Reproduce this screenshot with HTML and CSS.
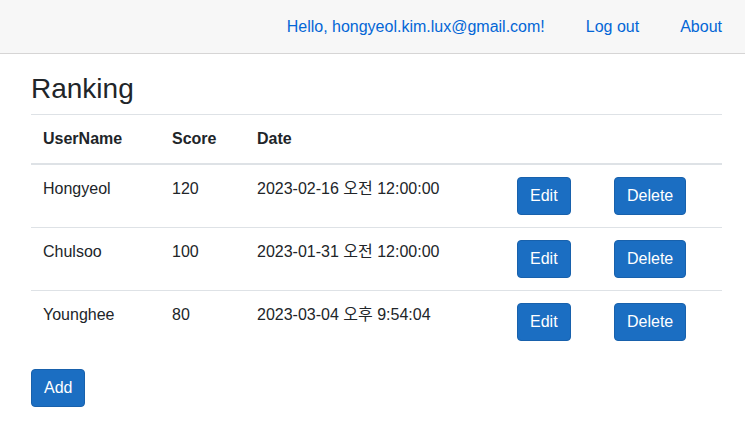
FILE: index.html
```html
<!DOCTYPE html>
<html>
<head>
<meta charset="utf-8">
<title>Ranking</title>
<link rel="stylesheet" href="styles.css">
</head>
<body>
<div class="top-row">
  <a href="#">Hello, hongyeol.kim.lux@gmail.com!</a>
  <a href="#">Log out</a>
  <a href="#">About</a>
</div>
<div class="content">
<h3>Ranking</h3>
<table class="table">
  <thead>
    <tr>
      <th class="col-name">UserName</th>
      <th class="col-score">Score</th>
      <th class="col-date">Date</th>
      <th class="col-edit"></th>
      <th class="col-del"></th>
    </tr>
  </thead>
  <tbody>
    <tr>
      <td>Hongyeol</td>
      <td>120</td>
      <td>2023-02-16 오전 12:00:00</td>
      <td><button class="btn">Edit</button></td>
      <td><button class="btn">Delete</button></td>
    </tr>
    <tr>
      <td>Chulsoo</td>
      <td>100</td>
      <td>2023-01-31 오전 12:00:00</td>
      <td><button class="btn">Edit</button></td>
      <td><button class="btn">Delete</button></td>
    </tr>
    <tr>
      <td>Younghee</td>
      <td>80</td>
      <td>2023-03-04 오후 9:54:04</td>
      <td><button class="btn">Edit</button></td>
      <td><button class="btn">Delete</button></td>
    </tr>
  </tbody>
</table>
<button class="btn">Add</button>
</div>
</body>
</html>
```

FILE: styles.css
```css
html, body {
  margin: 0;
  font-family: "Liberation Sans", Arial, "Noto Sans CJK KR", sans-serif;
  font-size: 16px;
  line-height: 1.5;
  color: #212529;
  background-color: #fff;
}
a { color: #0366d6; text-decoration: none; }

.top-row {
  display: flex;
  justify-content: flex-end;
  align-items: center;
  gap: 41px;
  height: 53px;
  padding-right: 23px;
  background-color: #f7f7f7;
  border-bottom: 1px solid #d6d5d5;
}

.content {
  padding: 18px 23px 0 31px;
}
h3 {
  margin: 0 0 8px 0;
  font-size: 28px;
  font-weight: 500;
  line-height: 1.2;
}

.table {
  width: 100%;
  border-collapse: collapse;
  margin-bottom: 16px;
}
.table th, .table td {
  padding: 12px;
  text-align: left;
  vertical-align: top;
  border-top: 1px solid #dee2e6;
}
.table thead th {
  font-weight: bold;
  border-bottom: 2px solid #dee2e6;
}
.col-name { width: 105px; }
.col-score { width: 61px; }
.col-date { width: 236px; }
.col-edit { width: 73px; }

.btn {
  font-family: inherit;
  font-size: 16px;
  line-height: 1.5;
  padding: 6px 12px;
  color: #fff;
  background-color: #1b6ec2;
  border: 1px solid #1861ac;
  border-radius: 4px;
  cursor: pointer;
}
```
